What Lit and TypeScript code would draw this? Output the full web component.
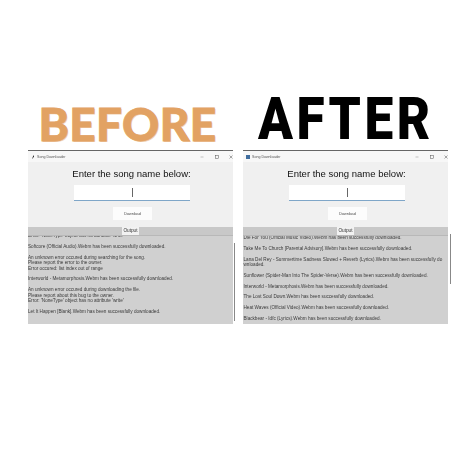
import { LitElement, html, css } from "lit";
import { customElement, property } from "lit/decorators.js";

@customElement("song-window")
class SongWindow extends LitElement {
  @property({ type: Array }) lines: string[] = [];
  @property({ type: Boolean }) after = false;
  static styles = css`
    :host { display: flex; flex-direction: column; width: 205px; height: 174px; background: #f0f0f0; font-family: "Liberation Sans", Arial, sans-serif; color: #222; border-top: 1px solid #666; box-sizing: border-box; }
    .bar { height: 11px; background: #f7f7f7; display: flex; align-items: center; padding: 0 0 0 3px; gap: 2px; font-size: 3.6px; color: #555; flex: none; }
    .bar .title { flex: 1; }
    .ico { width: 4px; height: 4px; flex: none; display: block; }
    .ctl { display: flex; gap: 10.5px; align-items: center; }
    .ctl svg { width: 4px; height: 4px; display: block; }
    .body { flex: 1; display: flex; flex-direction: column; align-items: center; min-height: 0; }
    h1 { margin: 5px 0 0 2px; font-size: 9.5px; line-height: 13px; font-weight: 400; color: #111; white-space: nowrap; }
    .entry { margin: 5px 0 0 3px; width: 116px; height: 16px; background: #fff; border-bottom: 1px solid #7fa6c8; box-sizing: border-box; display: flex; align-items: center; justify-content: center; flex: none; }
    .entry i { width: 0.7px; height: 9px; background: #666; display: block; }
    .btn { margin: 6px 0 0 4px; width: 39px; height: 13px; background: #fcfcfc; box-sizing: border-box; font-size: 3.7px; color: #444; display: flex; align-items: center; justify-content: center; flex: none; }
    .frame { margin-top: 7px; width: 100%; flex: 1; min-height: 0; display: flex; flex-direction: column; background: #d0d0d0; position: relative; }
    .tabs { height: 8px; flex: none; background: #c8c8c8; display: flex; justify-content: center; }
    .tab { background: #f2f2f2; font-size: 4.7px; line-height: 8px; padding: 0 1.5px; color: #333; }
    .log { flex: 1; min-height: 0; overflow: hidden; border-top: 1px solid #b8b8b8; }
    .log p { margin: 0; font-size: 4.65px; line-height: 5.4px; height: 5.4px; white-space: nowrap; color: #3a3a3a; }
    .lead { margin-top: -2.8px; }
    .after .lead { margin-top: -1px; }
    .after .log p { padding-left: 0.5px; }
    .sb { position: absolute; left: 205.5px; top: 16px; height: 78px; width: 0.8px; background: #888; }
    .after .sb { left: 206.5px; top: 7px; height: 50px; }
  `;
  render() {
    const icon = this.after
      ? html`<svg class="ico" viewBox="0 0 4 4"><rect width="4" height="4" fill="#3f6d9e" /></svg>`
      : html`<svg class="ico" viewBox="0 0 4 4"><path d="M1 4 L2 1.5 L3 0 L3 1.5 L2 3 Z" fill="#222" /></svg>`;
    return html`
      <div class="bar">
        ${icon}<span class="title">Song Downloader</span>
        <span class="ctl">
          <svg viewBox="0 0 4 4"><path d="M0.5 2H3.5" stroke="#888" stroke-width=".5" /></svg>
          <svg viewBox="0 0 4 4"><rect x=".5" y=".5" width="3" height="3" fill="none" stroke="#555" stroke-width=".5" /></svg>
          <svg viewBox="0 0 4 4"><path d="M.5 .5L3.5 3.5M3.5 .5L.5 3.5" stroke="#555" stroke-width=".5" /></svg>
        </span>
      </div>
      <div class="body">
        <h1>Enter the song name below:</h1>
        <div class="entry"><i></i></div>
        <div class="btn">Download</div>
        <div class="frame ${this.after ? "after" : ""}">
          <div class="tabs"><span class="tab">Output</span></div>
          <div class="log">
            <div class="lead"></div>
            ${this.lines.map((l) => html`<p>${l}</p>`)}
          </div>
          <div class="sb"></div>
        </div>
      </div>
    `;
  }
}

const BEFORE = [
  "Error: 'NoneType' object has no attribute 'write'",
  "",
  "Softcore (Official Audio).Webm has been successfully downloaded.",
  "",
  "An unknown error occured during searching for the song.",
  "Please report the error to the owner.",
  "Error occured: list index out of range",
  "",
  "Interworld - Metamorphosis.Webm has been successfully downloaded.",
  "",
  "An unknown error occured during downloading the file.",
  "Please report about this bug to the owner.",
  "Error: 'NoneType' object has no attribute 'write'",
  "",
  "Let It Happen [Blank].Webm has been successfully downloaded.",
];
const AFTER = [
  "Die For You (Official Music Video).Webm has been successfully downloaded.",
  "",
  "Take Me To Church [Parental Advisory].Webm has been successfully downloaded.",
  "",
  "Lana Del Rey - Summertime Sadness  Slowed + Reverb (Lyrics).Webm has been successfully do",
  "wnloaded.",
  "",
  "Sunflower (Spider-Man Into The Spider-Verse).Webm has been successfully downloaded.",
  "",
  "Interworld - Metamorphosis.Webm has been successfully downloaded.",
  "",
  "The Lost Soul Down.Webm has been successfully downloaded.",
  "",
  "Heat Waves (Official Video).Webm has been successfully downloaded.",
  "",
  "Blackbear - Idfc (Lyrics).Webm has been successfully downloaded.",
];

@customElement("app-root")
class AppRoot extends LitElement {
  static styles = css`
    :host { display: block; width: 474px; height: 474px; background: #fff; overflow: hidden; }
    .grid { display: grid; grid-template-columns: 205px 205px; column-gap: 10px; grid-template-rows: 150px auto; padding-left: 28px; }
    .head { display: flex; align-items: flex-end; justify-content: center; line-height: 1; white-space: nowrap; }
    .before { font-family: Lato, sans-serif; font-weight: 900; font-size: 46px; letter-spacing: 0.3px; color: #e2a263; -webkit-text-stroke: 0.8px #e2a263; text-shadow: 1px 0.5px 0 #f1d3b2; padding: 0 6px 3.5px 0; }
    .afterT { font-family: Roboto, sans-serif; font-weight: 900; font-size: 59px; letter-spacing: 4px; color: #000; padding-bottom: 2px; }
    .afterT span { transform: scaleX(0.87); }
    .before span, .afterT span { display: block; height: 1em; }
    song-window { filter: blur(0.25px); }
  `;
  render() {
    return html`
      <div class="grid">
        <div class="head before"><span>BEFORE</span></div>
        <div class="head afterT"><span>AFTER</span></div>
        <song-window .lines=${BEFORE}></song-window>
        <song-window .lines=${AFTER} .after=${true}></song-window>
      </div>
    `;
  }
}
